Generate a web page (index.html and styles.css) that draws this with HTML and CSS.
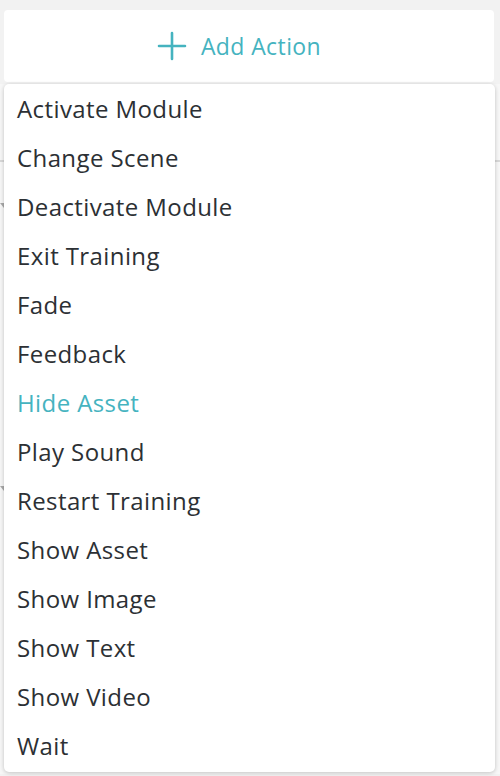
FILE: index.html
```html
<!DOCTYPE html>
<html>
<head>
<meta charset="utf-8">
<link rel="stylesheet" href="styles.css">
</head>
<body>
<div class="page">
  <div class="add-card">
    <button class="add-btn">
      <svg class="plus" width="30" height="30" viewBox="0 0 30 30"><path d="M15 2 V28 M2 15 H28" stroke="#45b3bf" stroke-width="2.6" stroke-linecap="round" fill="none"/></svg>
      <span>Add Action</span>
    </button>
  </div>
  <div class="behind">
    <div class="behind-row"><span class="caret"></span></div>
    <div class="behind-gap"></div>
    <div class="behind-row low"><span class="caret"></span></div>
  </div>
  <ul class="menu">
    <li>Activate Module</li>
    <li>Change Scene</li>
    <li>Deactivate Module</li>
    <li>Exit Training</li>
    <li>Fade</li>
    <li>Feedback</li>
    <li class="active">Hide Asset</li>
    <li>Play Sound</li>
    <li>Restart Training</li>
    <li>Show Asset</li>
    <li>Show Image</li>
    <li>Show Text</li>
    <li>Show Video</li>
    <li>Wait</li>
  </ul>
</div>
</body>
</html>
```
FILE: styles.css
```css
html, body {
  margin: 0;
  padding: 0;
  background: #f2f2f2;
  font-family: "Open Sans", "Noto Sans", sans-serif;
}
.page {
  position: relative;
  width: 500px;
  height: 776px;
  padding-top: 10px;
  box-sizing: border-box;
}
.add-card {
  margin: 0 6px 0 4px;
  height: 72px;
  background: #fff;
  border-radius: 4px;
  display: flex;
  align-items: center;
  justify-content: center;
}
.add-btn {
  display: flex;
  align-items: center;
  gap: 14px;
  border: 0;
  background: transparent;
  font-family: inherit;
  font-size: 23px;
  letter-spacing: 0.4px;
  color: #45b3bf;
  padding: 0;
  margin-right: 20px;
}
.plus { display: block; }
.behind {
  margin: 2px 0 0 0;
  background: #f7f7f7;
  height: 690px;
  display: flex;
  flex-direction: column;
}
.behind-row {
  height: 76px;
  border-bottom: 2px solid #d8d8d8;
  position: relative;
}
.behind-gap { height: 205px; }
.behind-row.low { border-bottom: none; }
.caret {
  position: absolute;
  left: 0;
  bottom: -48px;
  width: 0;
  height: 0;
  border-left: 4px solid transparent;
  border-right: 4px solid transparent;
  border-top: 5px solid #aaa;
}
.menu {
  position: absolute;
  top: 84px;
  left: 4px;
  width: 491px;
  margin: 0;
  padding: 0 0 2px 0;
  list-style: none;
  background: #fff;
  border-radius: 5px;
  box-shadow: 0 1px 4px rgba(0,0,0,0.22);
}
.menu li {
  height: 49px;
  line-height: 49px;
  padding-left: 13px;
  font-size: 24px;
  letter-spacing: 0.4px;
  color: #2c3034;
}
.menu li.active { color: #45b3bf; }
```
